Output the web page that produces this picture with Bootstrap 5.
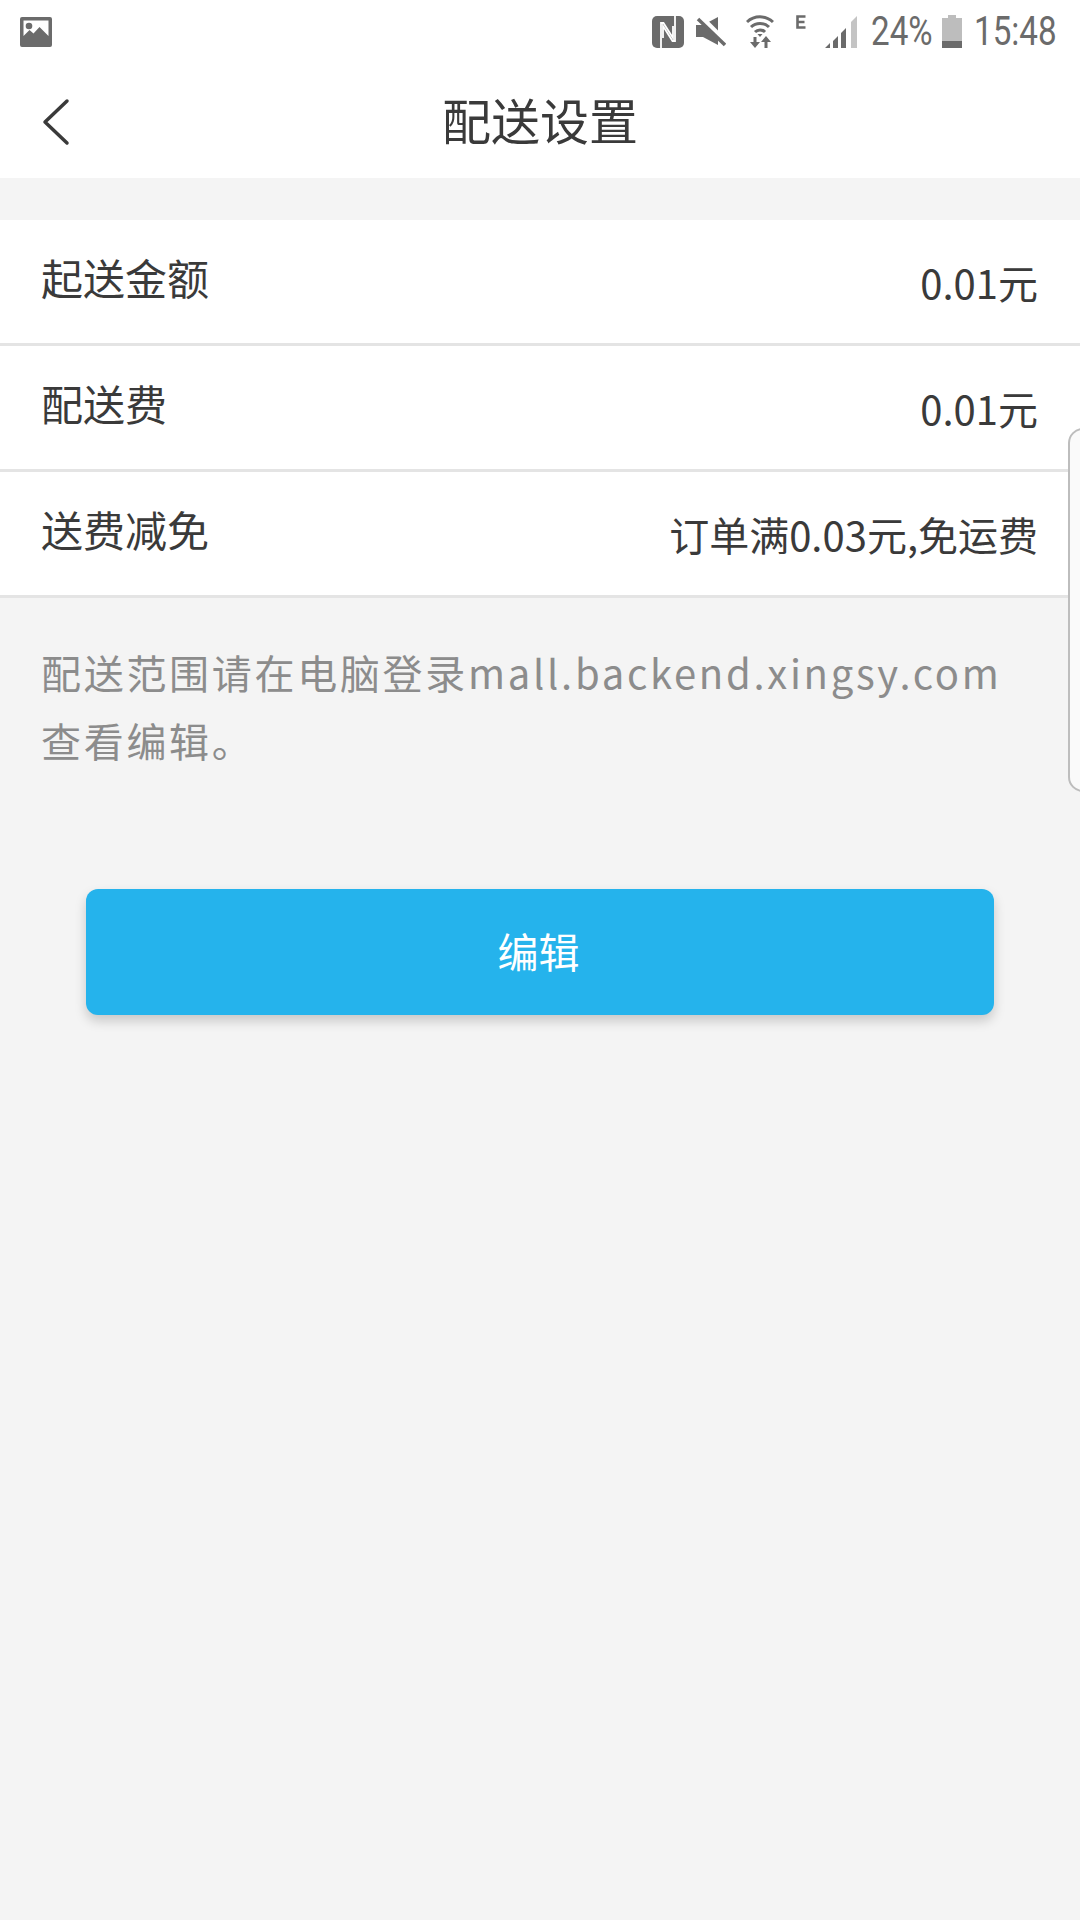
<!DOCTYPE html>
<html lang="zh">
<head>
<meta charset="utf-8">
<title>配送设置</title>
<link href="https://cdn.jsdelivr.net/npm/bootstrap@5.3.0/dist/css/bootstrap.min.css" rel="stylesheet">
<style>
html,body{height:100%}
body{width:1080px;height:1920px;overflow:hidden;background:#f4f4f4;font-family:"Noto Sans CJK SC","Noto Sans",sans-serif;color:#3a3a3a;position:relative}
.status-strip{height:60px;background:#fff;padding:3px 23px 0 20px;color:#6b6b6b}
.status-text{display:inline-block;font-family:Roboto,sans-serif;font-size:41px;line-height:41px;white-space:nowrap;transform:scaleX(.81);transform-origin:left center}
.s-mute{margin-left:12px}
.s-wifi{margin-left:20px}
.s-edge{margin-left:22px;margin-top:-19px}
.s-signal{margin-left:19px}
.s-pct{margin-left:14px;width:60px}
.s-batt{margin-left:11px}
.s-time{margin-left:12px;width:83px}
.title-strip{height:118px;background:#fff}
.title-text{font-size:49px;line-height:1;color:#3a3a3a;font-weight:400;margin:-2px 0 0}
.back-ico{position:absolute;left:41px;top:98px}
.group-box{margin-top:42px;background:#fff}
.set-row{height:126px;padding:0 42px;border-bottom:3px solid #e4e4e4;font-size:42px;line-height:60px;color:#3a3a3a;background:#fff}
.set-row .lbl{position:relative;top:-5px;left:-1px}
.set-row .val{position:relative;top:0;font-size:40px}
.hint-text{margin:0;padding:40px 41px 0;font-size:40px;line-height:68px;letter-spacing:2.7px;color:#8c8c8c;word-break:break-all}
.act-btn{display:block;width:908px;height:126px;margin:115px 0 0 86px;background:#25b3ec;border:0;border-radius:12px;color:#fff;font-size:41px;line-height:1;padding:0 3px 4px 0;box-shadow:0 6px 12px rgba(0,0,0,.18)}
.act-btn:hover,.act-btn:active{background:#25b3ec!important;color:#fff!important}
.edge-tab{position:absolute;left:1068px;top:428px;width:30px;height:364px;background:#fafafa;border:2px solid #bdbdbd;border-radius:18px}
</style>
</head>
<body>
<div class="status-strip d-flex align-items-center">
<svg width="32" height="30" viewBox="0 0 32 30"><path fill="#6b6b6b" fill-rule="evenodd" d="M2 0h28a2 2 0 0 1 2 2v26a2 2 0 0 1-2 2H2a2 2 0 0 1-2-2V2a2 2 0 0 1 2-2zM3.500 3.500V19l6-6 4 3.500 6-6.500 9 9V3.500z"/><circle cx="9" cy="9" r="3.300" fill="#6b6b6b"/></svg>
<div class="ms-auto d-flex align-items-center">
<svg width="32" height="32" viewBox="0 0 32 32"><rect width="32" height="32" rx="5" fill="#6b6b6b"/><path d="M9 32V7h2.500L21 22V10M23 0v25h-2.500L11 10v12" fill="none" stroke="#fff" stroke-width="1.800"/></svg>
<svg class="s-mute" width="30" height="30" viewBox="0 0 30 30"><path fill="#6b6b6b" d="M0 8h7L22 0v28L7 20H0z"/><path d="M7 2l24 24" stroke="#fff" stroke-width="5"/><path d="M2 2l27 26" stroke="#6b6b6b" stroke-width="3.500"/></svg>
<svg class="s-wifi" width="28" height="33" viewBox="0 0 28 33"><path d="M1 7a19 19 0 0 1 26 0M5 12a13 13 0 0 1 18 0M9 17a7 7 0 0 1 10 0" fill="none" stroke="#6b6b6b" stroke-width="3"/><path d="M14 22l-2.500-3h5z" fill="#6b6b6b"/><path d="M9 22v8M20 33v-9" stroke="#6b6b6b" stroke-width="3"/><path d="M4 27h10l-5 6zM15 27l5-6 5 6z" fill="#6b6b6b"/></svg>
<svg class="s-edge" width="10" height="14" viewBox="0 0 10 14"><path d="M9.500 1.500H1.500v11h8M1.500 7h7" fill="none" stroke="#6b6b6b" stroke-width="2.600"/></svg>
<svg class="s-signal" width="32" height="32" viewBox="0 0 32 32"><path fill="#6b6b6b" d="M0 32l5-5v5zM8 25l5-5v12H8zM16 17l5-5v20h-5z"/><path fill="#c4c4c4" d="M26 6l6-6v32h-6z"/></svg>
<span class="status-text s-pct">24%</span>
<svg class="s-batt" width="20" height="33" viewBox="0 0 20 33"><path fill="#bdbdbd" d="M6 0h8v3h6v30H0V3h6z"/><rect y="26" width="20" height="7" fill="#6b6b6b"/></svg>
<span class="status-text s-time">15:48</span>
</div>
</div>
<div class="title-strip d-flex align-items-center justify-content-center"><h1 class="title-text">配送设置</h1></div>
<svg class="back-ico" width="30" height="48" viewBox="0 0 30 48"><path d="M26 3L4 24l22 21" fill="none" stroke="#3a3a3a" stroke-width="3.500" stroke-linecap="round" stroke-linejoin="round"/></svg>
<div class="group-box">
<div class="set-row d-flex justify-content-between align-items-center"><span class="lbl">起送金额</span><span class="val">0.01元</span></div>
<div class="set-row d-flex justify-content-between align-items-center"><span class="lbl">配送费</span><span class="val">0.01元</span></div>
<div class="set-row d-flex justify-content-between align-items-center"><span class="lbl">送费减免</span><span class="val">订单满0.03元,免运费</span></div>
</div>
<p class="hint-text">配送范围请在电脑登录mall.backend.xingsy.com查看编辑。</p>
<button type="button" class="btn act-btn">编辑</button>
<div class="edge-tab"></div>
<script src="https://cdn.jsdelivr.net/npm/bootstrap@5.3.0/dist/js/bootstrap.bundle.min.js"></script>
</body>
</html>
